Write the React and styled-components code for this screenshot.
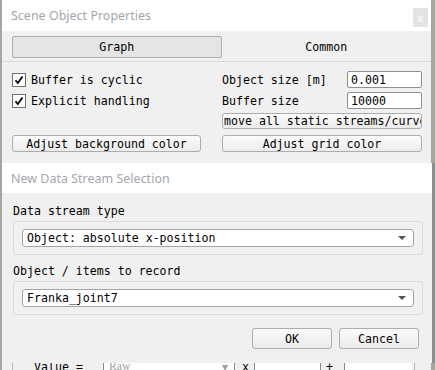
import React from "react";
import styled, { createGlobalStyle } from "styled-components";

const Global = createGlobalStyle`
  html, body { margin: 0; padding: 0; }
  body { background: #a9a59e; width: 435px; height: 370px; overflow: hidden; }
  * { box-sizing: border-box; }
`;

const mono = `"DejaVu Sans Mono", "Liberation Mono", monospace`;
const sans = `"Noto Sans", "Open Sans", sans-serif`;

const Desk = styled.div`
  position: relative;
  width: 435px;
  height: 370px;
  overflow: hidden;
  background: #a9a59e;
  font-family: ${mono};
  font-size: 11.6px;
  color: #000;
`;

const Window = styled.div`
  margin-left: 2px;
  width: 429px;
  height: 370px;
  background: #f0f0f0;
  display: flex;
  flex-direction: column;
  overflow: hidden;
`;

const TitleBar = styled.div`
  height: ${(p) => p.$h}px;
  flex: none;
  background: #fff;
  display: flex;
  align-items: center;
  justify-content: space-between;
  padding-left: 9px;
  padding-right: 3px;
`;

const Title = styled.span`
  font-family: ${sans};
  font-size: 12.4px;
  color: #a3a6ad;
  letter-spacing: 0.05px;
`;

const CloseBox = styled.div`
  width: 15px;
  height: 19px;
  margin-top: 4px;
  background: #e4e4e4;
  color: #f7f7f7;
  font-family: ${sans};
  font-size: 10px;
  font-weight: bold;
  display: flex;
  align-items: center;
  justify-content: center;
`;

const TabBar = styled.div`
  flex: none;
  height: 31px;
  padding: 5px 0 0 10px;
  border-bottom: 1px solid #d9d9d9;
  display: flex;
`;

const Tab = styled.div`
  width: 210px;
  height: 22px;
  display: flex;
  align-items: center;
  justify-content: center;
  border: 1px solid ${(p) => (p.$active ? "#adadad" : "transparent")};
  border-radius: 2px;
  background: ${(p) => (p.$active ? "#e5e5e5" : "transparent")};
`;

const Content = styled.div`
  flex: none;
  padding: 9px 0 0 10px;
  display: grid;
  grid-template-columns: 210px 200px;
  grid-template-rows: 17px 17px 16px 17px;
  row-gap: 4px;
  & > :nth-last-child(-n + 2) { margin-top: 4px; }
`;

const Cell = styled.div`
  display: flex;
  align-items: center;
  justify-content: ${(p) => (p.$between ? "space-between" : "flex-start")};
  gap: 5px;
  white-space: nowrap;
`;

const Box = styled.span`
  width: 14px;
  height: 14px;
  border: 1px solid #707070;
  background: #fff;
  display: flex;
  align-items: center;
  justify-content: center;
  flex: none;
`;

const Field = styled.div`
  width: 75px;
  height: 17px;
  background: #fff;
  border: 1px solid #8f8f8f;
  border-radius: 2px;
  padding-left: 3px;
  display: flex;
  align-items: center;
`;

const Button = styled.div`
  width: ${(p) => p.$w}px;
  height: ${(p) => p.$h || 17}px;
  border: 1px solid #adadad;
  border-radius: 3px;
  background: linear-gradient(#fbfbfb, #ececec);
  display: flex;
  align-items: center;
  justify-content: ${(p) => (p.$left ? "flex-start" : "center")};
  padding-left: ${(p) => (p.$left ? "1px" : "0")};
  overflow: hidden;
  white-space: nowrap;
`;

const TableRow = styled.div`
  flex: none;
  margin-top: 209px;
  margin-left: 10px;
  width: 403px;
  height: 20px;
  border-left: 1px solid #b8b8b8;
  border-right: 1px solid #b8b8b8;
  display: flex;
  padding-left: 10px;
`;

const TCell = styled.div`
  width: ${(p) => p.$w}px;
  height: 20px;
  background: ${(p) => (p.$white ? "#fff" : "transparent")};
  border-left: 1px solid ${(p) => (p.$line ? "#8a8a8a" : "transparent")};
  color: ${(p) => (p.$dim ? "#a0a0a0" : "#000")};
  font-family: ${(p) => (p.$serif ? `"Liberation Serif", serif` : mono)};
  padding: 1px 0 0 ${(p) => p.$pad || 0}px;
  display: flex;
  justify-content: ${(p) => (p.$center ? "center" : "space-between")};
  padding-right: 6px;
  flex: none;
`;

const Dialog = styled.div`
  position: absolute;
  top: 163px;
  left: 2px;
  width: 430px;
  height: 200px;
  background: #f0f0f0;
  box-shadow: 3px 0 0 #8e8e8e;
  display: flex;
  flex-direction: column;
`;

const Body = styled.div`
  padding: 10px 9px 0 11px;
  display: flex;
  flex-direction: column;
`;

const Label = styled.div`
  height: 16px;
  line-height: 16px;
  padding-left: 0;
  margin-top: ${(p) => p.$mt || 0}px;
`;

const Frame = styled.div`
  margin-top: 2px;
  width: 410px;
  height: 34px;
  border: 1px solid #dcdcdc;
  border-radius: 2px;
  padding: 7px 0 0 8px;
`;

const Combo = styled.div`
  width: 392px;
  height: 18px;
  background: #fff;
  border: 1px solid #a5a5a5;
  border-radius: 3px;
  display: flex;
  align-items: center;
  justify-content: space-between;
  padding: 0 7px 0 4px;
`;

const Arrow = styled.span`
  width: 0;
  height: 0;
  border-left: 4px solid transparent;
  border-right: 4px solid transparent;
  border-top: 4px solid #555;
`;

const Buttons = styled.div`
  margin-top: 13px;
  display: flex;
  justify-content: flex-end;
  gap: 7px;
  padding-right: 4px;
`;

function Check() {
  return (
    <Box>
      <svg width="10" height="10" viewBox="0 0 10 10">
        <path d="M1.5 5.2 L3.8 8 L8.5 1.5" fill="none" stroke="#000" strokeWidth="1.8" />
      </svg>
    </Box>
  );
}

export default function App() {
  return (
    <>
      <Global />
      <Desk>
        <Window>
          <TitleBar $h={31}>
            <Title>Scene Object Properties</Title>
            <CloseBox>x</CloseBox>
          </TitleBar>
          <TabBar>
            <Tab $active>Graph</Tab>
            <Tab>Common</Tab>
          </TabBar>
          <Content>
            <Cell><Check />Buffer is cyclic</Cell>
            <Cell $between>Object size [m]<Field>0.001</Field></Cell>
            <Cell><Check />Explicit handling</Cell>
            <Cell $between>Buffer size<Field>10000</Field></Cell>
            <Cell />
            <Cell><Button $w={200} $h={16} $left>move all static streams/curves</Button></Cell>
            <Cell><Button $w={189}>Adjust background color</Button></Cell>
            <Cell><Button $w={200}>Adjust grid color</Button></Cell>
          </Content>
          <TableRow>
            <TCell $w={80} $pad={10}>Value =</TCell>
            <TCell $w={131} $white $line $dim $serif $pad={5}>Raw<span>▾</span></TCell>
            <TCell $w={20} $line $pad={7}>x</TCell>
            <TCell $w={66} $white $line />
            <TCell $w={24} $line $center>+</TCell>
            <TCell $w={68} $white $line />
          </TableRow>
        </Window>
        <Dialog>
          <TitleBar $h={30}>
            <Title>New Data Stream Selection</Title>
          </TitleBar>
          <Body>
            <Label>Data stream type</Label>
            <Frame>
              <Combo>Object: absolute x-position<Arrow /></Combo>
            </Frame>
            <Label $mt={8}>Object / items to record</Label>
            <Frame>
              <Combo>Franka_joint7<Arrow /></Combo>
            </Frame>
            <Buttons>
              <Button $w={80} $h={21}>OK</Button>
              <Button $w={80} $h={21}>Cancel</Button>
            </Buttons>
          </Body>
        </Dialog>
      </Desk>
    </>
  );
}
